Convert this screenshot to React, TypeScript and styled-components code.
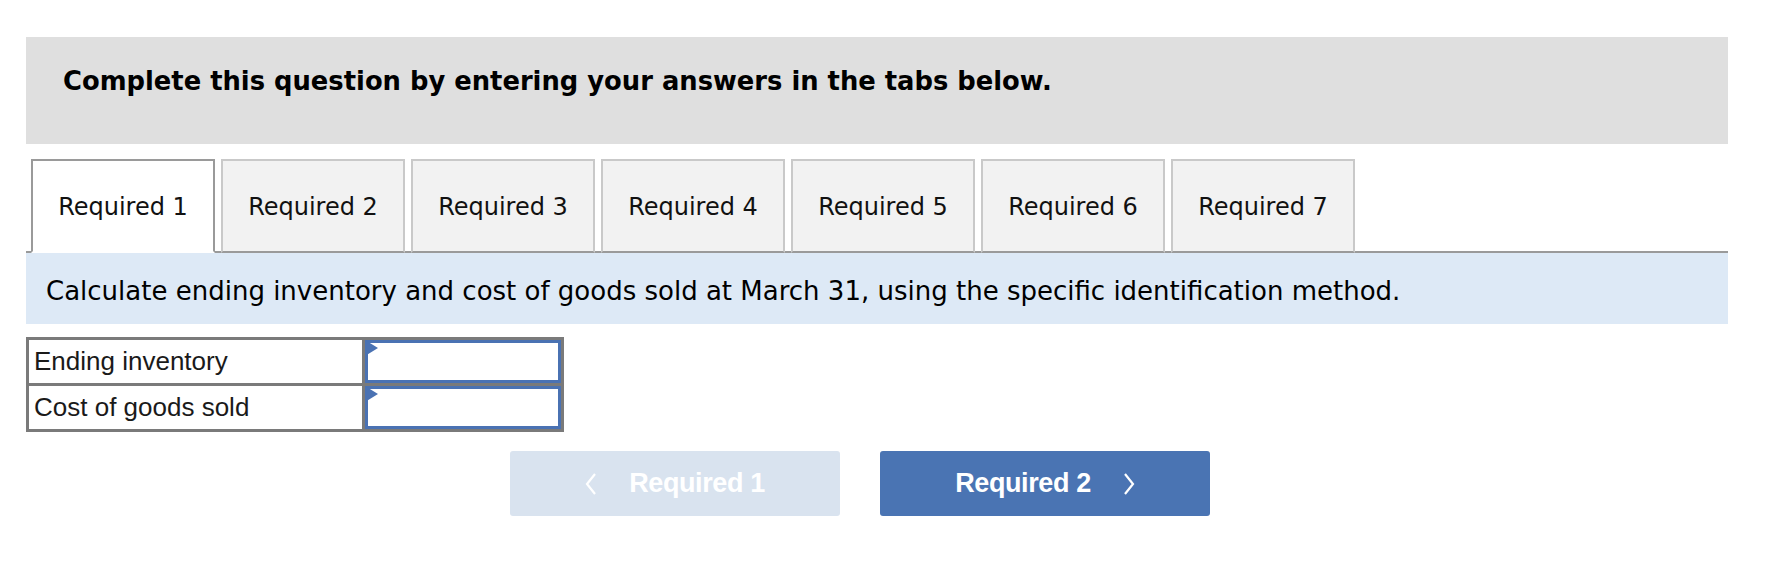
import React from "react";
import styled, { createGlobalStyle } from "styled-components";

const GlobalStyle = createGlobalStyle`
  html, body {
    margin: 0;
    padding: 0;
    background: #ffffff;
  }
  body {
    font-family: "DejaVu Sans", Verdana, sans-serif;
    color: #000;
  }
`;

const Page = styled.div`
  padding: 37px 46px 0 26px;
  width: 1702px;
`;

const Banner = styled.div`
  background: #dfdfdf;
  height: 107px;
  display: flex;
  align-items: flex-start;
  padding: 29px 0 0 37px;
  box-sizing: border-box;
`;

const BannerTitle = styled.h3`
  margin: 0;
  font-size: 25.8px;
  line-height: 30px;
  font-weight: bold;
  font-family: "DejaVu Sans", Verdana, sans-serif;
`;

const TabList = styled.div`
  display: flex;
  gap: 6px;
  margin-top: 15px;
  padding-left: 5px;
  border-bottom: 2px solid #9a9a9a;
`;

const Tab = styled.button<{ $active?: boolean }>`
  width: 184px;
  height: 94px;
  box-sizing: border-box;
  margin-bottom: -2px;
  font-family: "DejaVu Sans", Verdana, sans-serif;
  font-size: 24px;
  color: #111;
  cursor: pointer;
  background: ${(p) => (p.$active ? "#ffffff" : "#f2f2f2")};
  border: 2px solid ${(p) => (p.$active ? "#9a9a9a" : "#c9c9c9")};
  border-bottom: ${(p) => (p.$active ? "2px solid #ffffff" : "2px solid #9a9a9a")};
  padding: 2px 0 0;
`;

const Instruction = styled.div`
  background: #dde9f6;
  height: 71px;
  box-sizing: border-box;
  display: flex;
  align-items: center;
  padding: 4px 0 0 20px;
  font-size: 26px;
`;

const AnswerTable = styled.table`
  margin-top: 13px;
  border-collapse: collapse;
  font-family: "Liberation Sans", Arial, sans-serif;
  font-size: 26px;
`;

const LabelCell = styled.td`
  border: 3px solid #7a7a7a;
  width: 328px;
  height: 43px;
  padding: 0 0 0 5px;
  color: #1a1a1a;
`;

const InputCell = styled.td`
  border: 3px solid #7a7a7a;
  width: 196px;
  padding: 0;
  height: 43px;
`;

const InputWrap = styled.div`
  position: relative;
  height: 43px;
  &::after {
    content: "";
    position: absolute;
    z-index: 2;
    left: 0;
    top: 0;
    width: 0;
    height: 0;
    border-top: 8px solid transparent;
    border-bottom: 8px solid transparent;
    border-left: 13px solid #4a72b3;
  }
`;

const AmountInput = styled.input`
  width: 100%;
  height: 100%;
  box-sizing: border-box;
  border: 3px solid #4a72b3;
  outline: none;
  margin: 0;
  background: #fff;
`;

const NavRow = styled.div`
  display: flex;
  justify-content: center;
  gap: 40px;
  margin-top: 19px;
  padding-right: 34px;
`;

const NavButton = styled.button<{ $disabled?: boolean }>`
  width: 330px;
  height: 65px;
  border: none;
  border-radius: 3px;
  background: ${(p) => (p.$disabled ? "#d9e3ef" : "#4a74b3")};
  color: #ffffff;
  font-family: "Liberation Sans", Arial, sans-serif;
  font-weight: bold;
  font-size: 27px;
  letter-spacing: -0.4px;
  display: flex;
  align-items: center;
  justify-content: center;
  gap: 32px;
  cursor: ${(p) => (p.$disabled ? "default" : "pointer")};
`;

const Chevron = ({ dir }: { dir: "left" | "right" }) => (
  <svg width="12" height="22" viewBox="0 0 12 22" fill="none">
    <path
      d={dir === "left" ? "M10 1 L2 11 L10 21" : "M2 1 L10 11 L2 21"}
      stroke="#ffffff"
      strokeWidth="2.2"
      strokeLinejoin="miter"
    />
  </svg>
);

const tabs = [1, 2, 3, 4, 5, 6, 7];

export default function App() {
  return (
    <>
      <GlobalStyle />
      <Page>
        <Banner>
          <BannerTitle>Complete this question by entering your answers in the tabs below.</BannerTitle>
        </Banner>
        <TabList>
          {tabs.map((n) => (
            <Tab key={n} $active={n === 1}>
              Required {n}
            </Tab>
          ))}
        </TabList>
        <Instruction>
          Calculate ending inventory and cost of goods sold at March 31, using the specific identification method.
        </Instruction>
        <AnswerTable>
          <tbody>
            <tr>
              <LabelCell>Ending inventory</LabelCell>
              <InputCell>
                <InputWrap>
                  <AmountInput />
                </InputWrap>
              </InputCell>
            </tr>
            <tr>
              <LabelCell>Cost of goods sold</LabelCell>
              <InputCell>
                <InputWrap>
                  <AmountInput />
                </InputWrap>
              </InputCell>
            </tr>
          </tbody>
        </AnswerTable>
        <NavRow>
          <NavButton $disabled>
            <Chevron dir="left" />
            <span>Required 1</span>
          </NavButton>
          <NavButton>
            <span>Required 2</span>
            <Chevron dir="right" />
          </NavButton>
        </NavRow>
      </Page>
    </>
  );
}
